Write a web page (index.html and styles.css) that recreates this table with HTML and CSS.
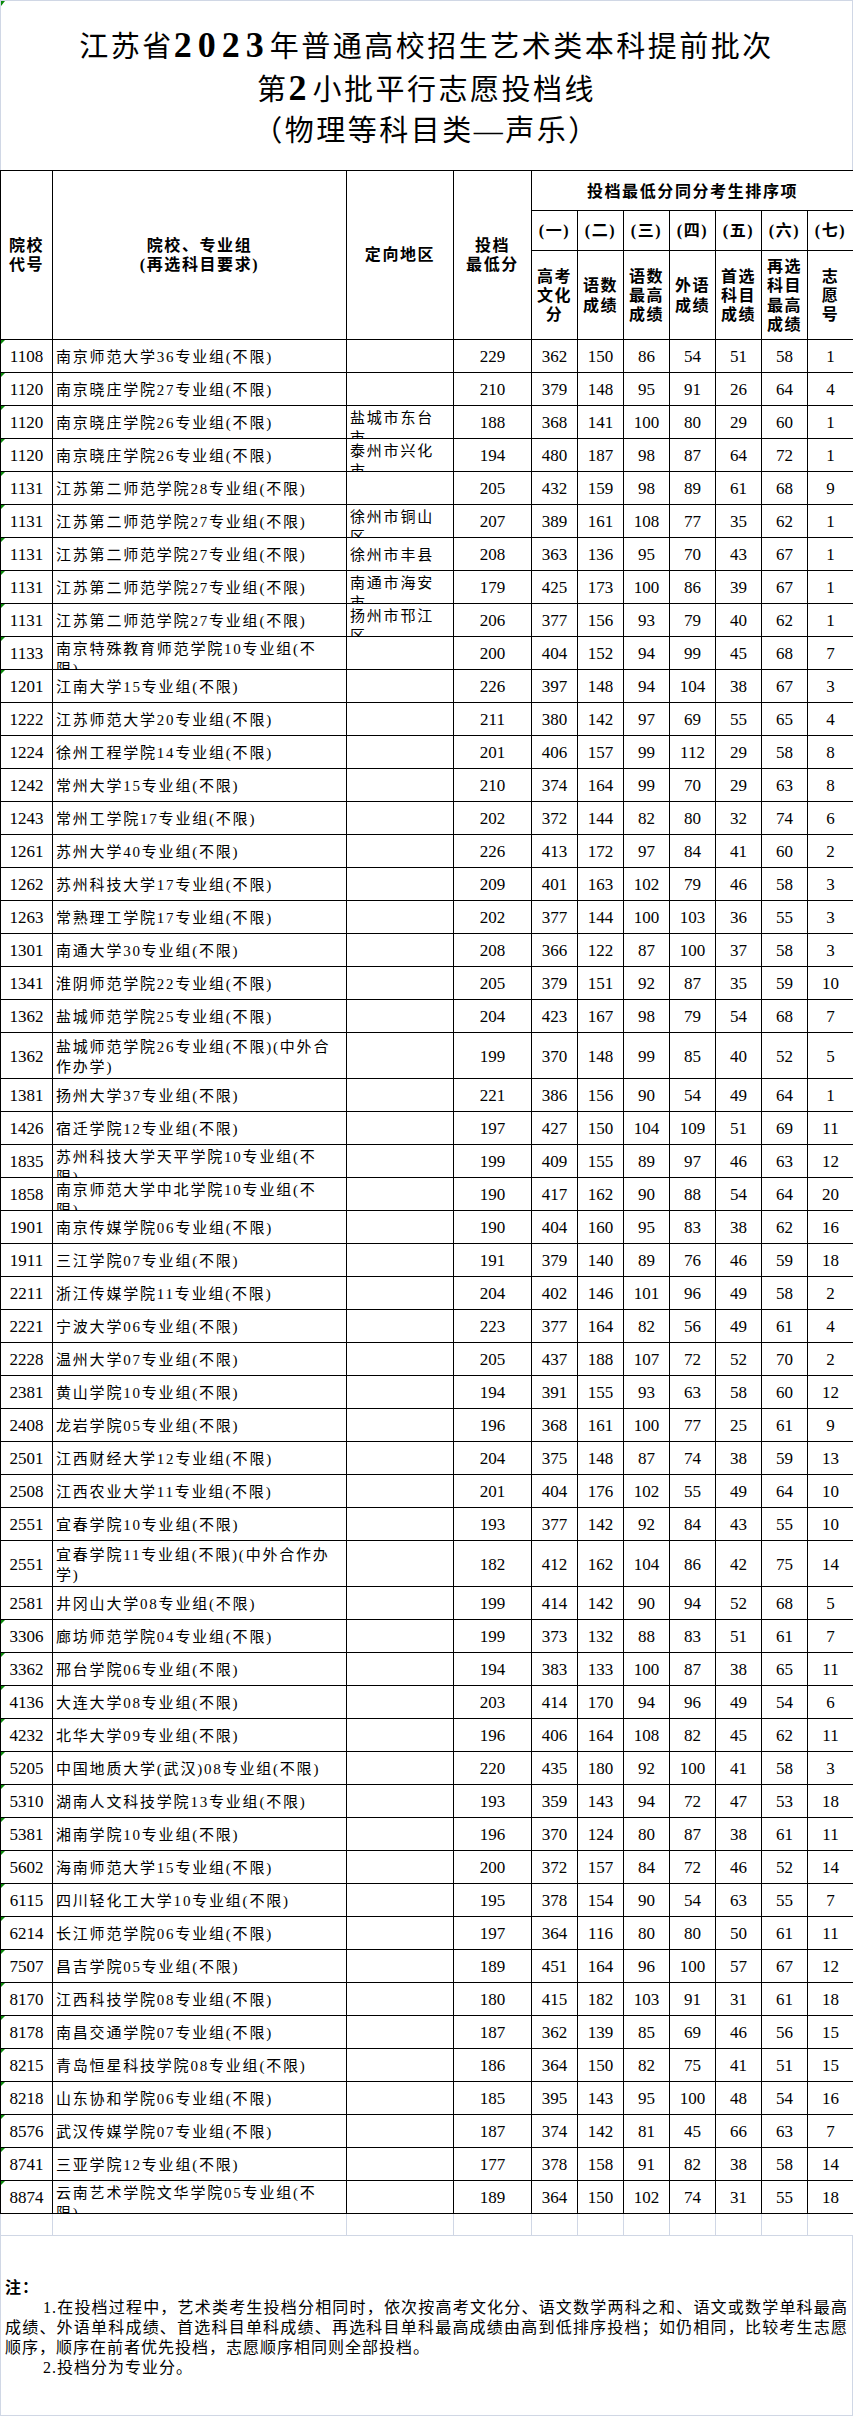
FILE: index.html
```html
<!DOCTYPE html>
<html lang="zh-CN">
<head>
<meta charset="utf-8">
<title>江苏省2023年普通高校招生艺术类本科提前批次第2小批平行志愿投档线</title>
<link rel="stylesheet" href="styles.css">
</head>
<body>
<div class="sheet">
  <div class="title">
    <div class="line">江苏省<span class="tnum">2023</span>年普通高校招生艺术类本科提前批次</div>
    <div class="line">第<span class="tnum">2</span>小批平行志愿投档线</div>
    <div class="line">（物理等科目类—声乐）</div>
  </div>
  <table class="grid">
    <colgroup>
      <col class="w-code"><col class="w-name"><col class="w-reg"><col class="w-min">
      <col class="w-s"><col class="w-s"><col class="w-s"><col class="w-s"><col class="w-s"><col class="w-s"><col class="w-s">
    </colgroup>
    <thead>
      <tr class="ha">
        <th rowspan="3">院校<br>代号</th>
        <th rowspan="3">院校、专业组<br>(再选科目要求)</th>
        <th rowspan="3">定向地区</th>
        <th rowspan="3">投档<br>最低分</th>
        <th colspan="7"><div class="hA">投档最低分同分考生排序项</div></th>
      </tr>
      <tr class="hb">
        <th><div class="hB">(一)</div></th><th><div class="hB">(二)</div></th><th><div class="hB">(三)</div></th><th><div class="hB">(四)</div></th><th><div class="hB">(五)</div></th><th><div class="hB">(六)</div></th><th><div class="hB">(七)</div></th>
      </tr>
      <tr class="hc">
        <th><div class="hC">高考<br>文化<br>分</div></th>
        <th><div class="hC">语数<br>成绩</div></th>
        <th><div class="hC">语数<br>最高<br>成绩</div></th>
        <th><div class="hC">外语<br>成绩</div></th>
        <th><div class="hC">首选<br>科目<br>成绩</div></th>
        <th><div class="hC">再选<br>科目<br>最高<br>成绩</div></th>
        <th><div class="hC">志<br>愿<br>号</div></th>
      </tr>
    </thead>
    <tbody>
      <tr class="g"><td>1108</td><td><div class="c t">南京师范大学36专业组(不限)</div></td><td><div class="c t"></div></td><td>229</td><td>362</td><td>150</td><td>86</td><td>54</td><td>51</td><td>58</td><td>1</td></tr>
      <tr class="g"><td>1120</td><td><div class="c t">南京晓庄学院27专业组(不限)</div></td><td><div class="c t"></div></td><td>210</td><td>379</td><td>148</td><td>95</td><td>91</td><td>26</td><td>64</td><td>4</td></tr>
      <tr class="g"><td>1120</td><td><div class="c t">南京晓庄学院26专业组(不限)</div></td><td><div class="c t w">盐城市东台<br>市</div></td><td>188</td><td>368</td><td>141</td><td>100</td><td>80</td><td>29</td><td>60</td><td>1</td></tr>
      <tr class="g"><td>1120</td><td><div class="c t">南京晓庄学院26专业组(不限)</div></td><td><div class="c t w">泰州市兴化<br>市</div></td><td>194</td><td>480</td><td>187</td><td>98</td><td>87</td><td>64</td><td>72</td><td>1</td></tr>
      <tr class="g"><td>1131</td><td><div class="c t">江苏第二师范学院28专业组(不限)</div></td><td><div class="c t"></div></td><td>205</td><td>432</td><td>159</td><td>98</td><td>89</td><td>61</td><td>68</td><td>9</td></tr>
      <tr class="g"><td>1131</td><td><div class="c t">江苏第二师范学院27专业组(不限)</div></td><td><div class="c t w">徐州市铜山<br>区</div></td><td>207</td><td>389</td><td>161</td><td>108</td><td>77</td><td>35</td><td>62</td><td>1</td></tr>
      <tr class="g"><td>1131</td><td><div class="c t">江苏第二师范学院27专业组(不限)</div></td><td><div class="c t">徐州市丰县</div></td><td>208</td><td>363</td><td>136</td><td>95</td><td>70</td><td>43</td><td>67</td><td>1</td></tr>
      <tr class="g"><td>1131</td><td><div class="c t">江苏第二师范学院27专业组(不限)</div></td><td><div class="c t w">南通市海安<br>市</div></td><td>179</td><td>425</td><td>173</td><td>100</td><td>86</td><td>39</td><td>67</td><td>1</td></tr>
      <tr class="g"><td>1131</td><td><div class="c t">江苏第二师范学院27专业组(不限)</div></td><td><div class="c t w">扬州市邗江<br>区</div></td><td>206</td><td>377</td><td>156</td><td>93</td><td>79</td><td>40</td><td>62</td><td>1</td></tr>
      <tr class="g"><td>1133</td><td><div class="c t w">南京特殊教育师范学院10专业组(不<br>限)</div></td><td><div class="c t"></div></td><td>200</td><td>404</td><td>152</td><td>94</td><td>99</td><td>45</td><td>68</td><td>7</td></tr>
      <tr class="g"><td>1201</td><td><div class="c t">江南大学15专业组(不限)</div></td><td><div class="c t"></div></td><td>226</td><td>397</td><td>148</td><td>94</td><td>104</td><td>38</td><td>67</td><td>3</td></tr>
      <tr><td>1222</td><td><div class="c t">江苏师范大学20专业组(不限)</div></td><td><div class="c t"></div></td><td>211</td><td>380</td><td>142</td><td>97</td><td>69</td><td>55</td><td>65</td><td>4</td></tr>
      <tr><td>1224</td><td><div class="c t">徐州工程学院14专业组(不限)</div></td><td><div class="c t"></div></td><td>201</td><td>406</td><td>157</td><td>99</td><td>112</td><td>29</td><td>58</td><td>8</td></tr>
      <tr><td>1242</td><td><div class="c t">常州大学15专业组(不限)</div></td><td><div class="c t"></div></td><td>210</td><td>374</td><td>164</td><td>99</td><td>70</td><td>29</td><td>63</td><td>8</td></tr>
      <tr><td>1243</td><td><div class="c t">常州工学院17专业组(不限)</div></td><td><div class="c t"></div></td><td>202</td><td>372</td><td>144</td><td>82</td><td>80</td><td>32</td><td>74</td><td>6</td></tr>
      <tr><td>1261</td><td><div class="c t">苏州大学40专业组(不限)</div></td><td><div class="c t"></div></td><td>226</td><td>413</td><td>172</td><td>97</td><td>84</td><td>41</td><td>60</td><td>2</td></tr>
      <tr><td>1262</td><td><div class="c t">苏州科技大学17专业组(不限)</div></td><td><div class="c t"></div></td><td>209</td><td>401</td><td>163</td><td>102</td><td>79</td><td>46</td><td>58</td><td>3</td></tr>
      <tr><td>1263</td><td><div class="c t">常熟理工学院17专业组(不限)</div></td><td><div class="c t"></div></td><td>202</td><td>377</td><td>144</td><td>100</td><td>103</td><td>36</td><td>55</td><td>3</td></tr>
      <tr><td>1301</td><td><div class="c t">南通大学30专业组(不限)</div></td><td><div class="c t"></div></td><td>208</td><td>366</td><td>122</td><td>87</td><td>100</td><td>37</td><td>58</td><td>3</td></tr>
      <tr><td>1341</td><td><div class="c t">淮阴师范学院22专业组(不限)</div></td><td><div class="c t"></div></td><td>205</td><td>379</td><td>151</td><td>92</td><td>87</td><td>35</td><td>59</td><td>10</td></tr>
      <tr><td>1362</td><td><div class="c t">盐城师范学院25专业组(不限)</div></td><td><div class="c t"></div></td><td>204</td><td>423</td><td>167</td><td>98</td><td>79</td><td>54</td><td>68</td><td>7</td></tr>
      <tr class="tall"><td>1362</td><td><div class="c t">盐城师范学院26专业组(不限)(中外合<br>作办学)</div></td><td><div class="c t"></div></td><td>199</td><td>370</td><td>148</td><td>99</td><td>85</td><td>40</td><td>52</td><td>5</td></tr>
      <tr><td>1381</td><td><div class="c t">扬州大学37专业组(不限)</div></td><td><div class="c t"></div></td><td>221</td><td>386</td><td>156</td><td>90</td><td>54</td><td>49</td><td>64</td><td>1</td></tr>
      <tr><td>1426</td><td><div class="c t">宿迁学院12专业组(不限)</div></td><td><div class="c t"></div></td><td>197</td><td>427</td><td>150</td><td>104</td><td>109</td><td>51</td><td>69</td><td>11</td></tr>
      <tr><td>1835</td><td><div class="c t w">苏州科技大学天平学院10专业组(不<br>限)</div></td><td><div class="c t"></div></td><td>199</td><td>409</td><td>155</td><td>89</td><td>97</td><td>46</td><td>63</td><td>12</td></tr>
      <tr><td>1858</td><td><div class="c t w">南京师范大学中北学院10专业组(不<br>限)</div></td><td><div class="c t"></div></td><td>190</td><td>417</td><td>162</td><td>90</td><td>88</td><td>54</td><td>64</td><td>20</td></tr>
      <tr><td>1901</td><td><div class="c t">南京传媒学院06专业组(不限)</div></td><td><div class="c t"></div></td><td>190</td><td>404</td><td>160</td><td>95</td><td>83</td><td>38</td><td>62</td><td>16</td></tr>
      <tr><td>1911</td><td><div class="c t">三江学院07专业组(不限)</div></td><td><div class="c t"></div></td><td>191</td><td>379</td><td>140</td><td>89</td><td>76</td><td>46</td><td>59</td><td>18</td></tr>
      <tr><td>2211</td><td><div class="c t">浙江传媒学院11专业组(不限)</div></td><td><div class="c t"></div></td><td>204</td><td>402</td><td>146</td><td>101</td><td>96</td><td>49</td><td>58</td><td>2</td></tr>
      <tr><td>2221</td><td><div class="c t">宁波大学06专业组(不限)</div></td><td><div class="c t"></div></td><td>223</td><td>377</td><td>164</td><td>82</td><td>56</td><td>49</td><td>61</td><td>4</td></tr>
      <tr><td>2228</td><td><div class="c t">温州大学07专业组(不限)</div></td><td><div class="c t"></div></td><td>205</td><td>437</td><td>188</td><td>107</td><td>72</td><td>52</td><td>70</td><td>2</td></tr>
      <tr><td>2381</td><td><div class="c t">黄山学院10专业组(不限)</div></td><td><div class="c t"></div></td><td>194</td><td>391</td><td>155</td><td>93</td><td>63</td><td>58</td><td>60</td><td>12</td></tr>
      <tr><td>2408</td><td><div class="c t">龙岩学院05专业组(不限)</div></td><td><div class="c t"></div></td><td>196</td><td>368</td><td>161</td><td>100</td><td>77</td><td>25</td><td>61</td><td>9</td></tr>
      <tr><td>2501</td><td><div class="c t">江西财经大学12专业组(不限)</div></td><td><div class="c t"></div></td><td>204</td><td>375</td><td>148</td><td>87</td><td>74</td><td>38</td><td>59</td><td>13</td></tr>
      <tr><td>2508</td><td><div class="c t">江西农业大学11专业组(不限)</div></td><td><div class="c t"></div></td><td>201</td><td>404</td><td>176</td><td>102</td><td>55</td><td>49</td><td>64</td><td>10</td></tr>
      <tr><td>2551</td><td><div class="c t">宜春学院10专业组(不限)</div></td><td><div class="c t"></div></td><td>193</td><td>377</td><td>142</td><td>92</td><td>84</td><td>43</td><td>55</td><td>10</td></tr>
      <tr class="tall"><td>2551</td><td><div class="c t">宜春学院11专业组(不限)(中外合作办<br>学)</div></td><td><div class="c t"></div></td><td>182</td><td>412</td><td>162</td><td>104</td><td>86</td><td>42</td><td>75</td><td>14</td></tr>
      <tr><td>2581</td><td><div class="c t">井冈山大学08专业组(不限)</div></td><td><div class="c t"></div></td><td>199</td><td>414</td><td>142</td><td>90</td><td>94</td><td>52</td><td>68</td><td>5</td></tr>
      <tr class="g"><td>3306</td><td><div class="c t">廊坊师范学院04专业组(不限)</div></td><td><div class="c t"></div></td><td>199</td><td>373</td><td>132</td><td>88</td><td>83</td><td>51</td><td>61</td><td>7</td></tr>
      <tr class="g"><td>3362</td><td><div class="c t">邢台学院06专业组(不限)</div></td><td><div class="c t"></div></td><td>194</td><td>383</td><td>133</td><td>100</td><td>87</td><td>38</td><td>65</td><td>11</td></tr>
      <tr class="g"><td>4136</td><td><div class="c t">大连大学08专业组(不限)</div></td><td><div class="c t"></div></td><td>203</td><td>414</td><td>170</td><td>94</td><td>96</td><td>49</td><td>54</td><td>6</td></tr>
      <tr class="g"><td>4232</td><td><div class="c t">北华大学09专业组(不限)</div></td><td><div class="c t"></div></td><td>196</td><td>406</td><td>164</td><td>108</td><td>82</td><td>45</td><td>62</td><td>11</td></tr>
      <tr class="g"><td>5205</td><td><div class="c t">中国地质大学(武汉)08专业组(不限)</div></td><td><div class="c t"></div></td><td>220</td><td>435</td><td>180</td><td>92</td><td>100</td><td>41</td><td>58</td><td>3</td></tr>
      <tr class="g"><td>5310</td><td><div class="c t">湖南人文科技学院13专业组(不限)</div></td><td><div class="c t"></div></td><td>193</td><td>359</td><td>143</td><td>94</td><td>72</td><td>47</td><td>53</td><td>18</td></tr>
      <tr class="g"><td>5381</td><td><div class="c t">湘南学院10专业组(不限)</div></td><td><div class="c t"></div></td><td>196</td><td>370</td><td>124</td><td>80</td><td>87</td><td>38</td><td>61</td><td>11</td></tr>
      <tr class="g"><td>5602</td><td><div class="c t">海南师范大学15专业组(不限)</div></td><td><div class="c t"></div></td><td>200</td><td>372</td><td>157</td><td>84</td><td>72</td><td>46</td><td>52</td><td>14</td></tr>
      <tr class="g"><td>6115</td><td><div class="c t">四川轻化工大学10专业组(不限)</div></td><td><div class="c t"></div></td><td>195</td><td>378</td><td>154</td><td>90</td><td>54</td><td>63</td><td>55</td><td>7</td></tr>
      <tr class="g"><td>6214</td><td><div class="c t">长江师范学院06专业组(不限)</div></td><td><div class="c t"></div></td><td>197</td><td>364</td><td>116</td><td>80</td><td>80</td><td>50</td><td>61</td><td>11</td></tr>
      <tr class="g"><td>7507</td><td><div class="c t">昌吉学院05专业组(不限)</div></td><td><div class="c t"></div></td><td>189</td><td>451</td><td>164</td><td>96</td><td>100</td><td>57</td><td>67</td><td>12</td></tr>
      <tr class="g"><td>8170</td><td><div class="c t">江西科技学院08专业组(不限)</div></td><td><div class="c t"></div></td><td>180</td><td>415</td><td>182</td><td>103</td><td>91</td><td>31</td><td>61</td><td>18</td></tr>
      <tr class="g"><td>8178</td><td><div class="c t">南昌交通学院07专业组(不限)</div></td><td><div class="c t"></div></td><td>187</td><td>362</td><td>139</td><td>85</td><td>69</td><td>46</td><td>56</td><td>15</td></tr>
      <tr class="g"><td>8215</td><td><div class="c t">青岛恒星科技学院08专业组(不限)</div></td><td><div class="c t"></div></td><td>186</td><td>364</td><td>150</td><td>82</td><td>75</td><td>41</td><td>51</td><td>15</td></tr>
      <tr class="g"><td>8218</td><td><div class="c t">山东协和学院06专业组(不限)</div></td><td><div class="c t"></div></td><td>185</td><td>395</td><td>143</td><td>95</td><td>100</td><td>48</td><td>54</td><td>16</td></tr>
      <tr class="g"><td>8576</td><td><div class="c t">武汉传媒学院07专业组(不限)</div></td><td><div class="c t"></div></td><td>187</td><td>374</td><td>142</td><td>81</td><td>45</td><td>66</td><td>63</td><td>7</td></tr>
      <tr class="g"><td>8741</td><td><div class="c t">三亚学院12专业组(不限)</div></td><td><div class="c t"></div></td><td>177</td><td>378</td><td>158</td><td>91</td><td>82</td><td>38</td><td>58</td><td>14</td></tr>
      <tr class="g"><td>8874</td><td><div class="c t w">云南艺术学院文华学院05专业组(不<br>限)</div></td><td><div class="c t"></div></td><td>189</td><td>364</td><td>150</td><td>102</td><td>74</td><td>31</td><td>55</td><td>18</td></tr>
    </tbody>
  </table>
  <table class="blank">
    <colgroup>
      <col class="w-code"><col class="w-name"><col class="w-reg"><col class="w-min">
      <col class="w-s"><col class="w-s"><col class="w-s"><col class="w-s"><col class="w-s"><col class="w-s"><col class="w-s">
    </colgroup>
    <tr><td></td><td></td><td></td><td></td><td></td><td></td><td></td><td></td><td></td><td></td><td></td></tr>
  </table>
  <div class="notes">
    <div class="nh">注：</div>
    <div class="np">
      <span class="jl first">1.在投档过程中，艺术类考生投档分相同时，依次按高考文化分、语文数学两科之和、语文或数学单科最高</span>
      <span class="jl">成绩、外语单科成绩、首选科目单科成绩、再选科目单科最高成绩由高到低排序投档；如仍相同，比较考生志愿</span>
      <span class="ll">顺序，顺序在前者优先投档，志愿顺序相同则全部投档。</span>
    </div>
    <div class="np">
      <span class="ll first">2.投档分为专业分。</span>
    </div>
  </div>
</div>
</body>
</html>
```

FILE: styles.css
```css
html, body {
  margin: 0;
  padding: 0;
  background: #ffffff;
}

body {
  font-family: "Liberation Serif", "Noto Sans CJK SC", serif;
  color: #000000;
}

.sheet {
  width: 853px;
}

/* ---------- title ---------- */
.title {
  position: relative;
  box-sizing: border-box;
  height: 170px;
  border: 1px solid #d0d7e5;
  border-bottom: none;
  padding-top: 23px;
  text-align: center;
}

.title::before {
  content: "";
  position: absolute;
  left: 0;
  top: 0;
  border-top: 5px solid #0a8a0a;
  border-right: 4px solid transparent;
}

.title .line {
  font-size: 29px;
  line-height: 43px;
  height: 43px;
  letter-spacing: 2.5px;
  white-space: nowrap;
}

.tnum {
  font-size: 36px;
  font-weight: bold;
  letter-spacing: 6px;
}

/* ---------- main grid ---------- */
.grid,
.blank {
  border-collapse: collapse;
  table-layout: fixed;
  width: 853px;
}

.w-code { width: 52px; }
.w-name { width: 294px; }
.w-reg  { width: 107px; }
.w-min  { width: 78px; }
.w-s    { width: 46px; }

.grid th,
.grid td {
  border: 1px solid #000000;
  padding: 0;
  vertical-align: middle;
}

.grid th {
  font-weight: bold;
  font-size: 16px;
  letter-spacing: 1.6px;
  line-height: 19.5px;
  text-align: center;
}

.hA {
  height: 39px;
  line-height: 41px;
}

.hB {
  height: 39px;
  line-height: 39px;
}

.hC {
  height: 88px;
  display: flex;
  align-items: center;
  justify-content: center;
  line-height: 19.2px;
  padding-top: 1px;
  box-sizing: border-box;
}

.grid td {
  font-size: 17px;
  text-align: center;
  line-height: 20px;
  padding-top: 2px;
}

.grid tr.g td:first-child {
  position: relative;
}

.grid tr.g td:first-child::before {
  content: "";
  position: absolute;
  left: 0;
  top: 0;
  border-top: 4px solid #0a8a0a;
  border-right: 4px solid transparent;
}

.c {
  box-sizing: border-box;
  height: 30px;
  overflow: hidden;
  display: flex;
  align-items: center;
}

.tall .c {
  height: 43px;
}

.t {
  font-size: 15px;
  letter-spacing: 1.8px;
  line-height: 20px;
  padding-left: 3px;
  text-align: left;
  white-space: nowrap;
}

.t.w {
  align-items: flex-start;
  padding-top: 0;
  margin-top: -1px;
}

/* ---------- blank spreadsheet row ---------- */
.blank td {
  height: 21px;
  padding: 0;
  border: 1px solid #d0d7e5;
  border-top: none;
}

/* ---------- notes ---------- */
.notes {
  box-sizing: border-box;
  height: 180px;
  border: 1px solid #d0d7e5;
  border-top: none;
  padding: 42px 4px 0 4px;
  font-size: 16px;
  letter-spacing: 1px;
  line-height: 20px;
  white-space: nowrap;
}

.notes .nh {
  font-weight: bold;
}

.np .jl,
.np .ll {
  display: block;
}

.np .jl {
  white-space: normal;
  text-align: justify;
  text-align-last: justify;
}

.np .first {
  padding-left: 38px;
}
```
